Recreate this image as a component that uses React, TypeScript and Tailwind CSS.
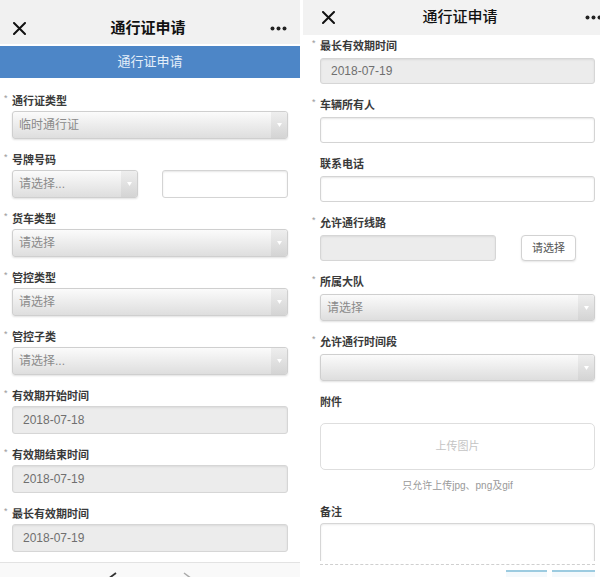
import React from 'react';

const FONT = { fontFamily: '"Liberation Sans", "Noto Sans CJK SC", sans-serif' };

const CloseIcon: React.FC = () => (
  <svg width="13" height="13" viewBox="0 0 13 13" className="shrink-0">
    <path d="M1 1 L12 12 M12 1 L1 12" stroke="#111" strokeWidth="2" strokeLinecap="round" />
  </svg>
);

const MoreIcon: React.FC = () => (
  <svg width="17" height="5" viewBox="0 0 17 5" className="shrink-0">
    <circle cx="2.5" cy="2.5" r="2" fill="#222" />
    <circle cx="8.5" cy="2.5" r="2" fill="#222" />
    <circle cx="14.5" cy="2.5" r="2" fill="#222" />
  </svg>
);

const Label: React.FC<{ text: string; required?: boolean }> = ({ text, required = true }) => (
  <div className="flex items-center h-[16px] text-[11px] leading-[16px] text-[#3a3a3a] font-bold">
    <span className="-ml-[8px] w-[8px] text-[9px] font-normal text-[#999] self-start leading-[10px]">{required ? '*' : ''}</span>
    {text}
  </div>
);

// jQuery-mobile style select with gradient and small arrow at right
const SelectBox: React.FC<{ value?: string; h?: string }> = ({ value = '', h = 'h-[28px]' }) => (
  <div className={`${h} flex items-stretch rounded-[3px] border border-[#cfcfcf] bg-linear-to-b from-[#fbfbfb] to-[#dedede] shadow-[0_1px_2px_rgba(0,0,0,0.12)]`}>
    <div className="flex-1 flex items-center pl-[6px] text-[12px] text-[#8a8a8a] truncate">{value}</div>
    <div className="w-[16px] flex items-center justify-center bg-linear-to-b from-[#eeeeee] to-[#d4d4d4] rounded-r-[3px]">
      <svg width="5" height="4" viewBox="0 0 5 4">
        <path d="M0 0 L5 0 L2.5 4 Z" fill="#ffffff" />
      </svg>
    </div>
  </div>
);

const DisabledInput: React.FC<{ value?: string; h?: string }> = ({ value = '', h = 'h-[28px]' }) => (
  <div className={`${h} flex items-center rounded-[3px] border border-[#d6d6d6] bg-[#ececec] pl-[10px] text-[12px] text-[#6f6f6f] shadow-[inset_0_1px_2px_rgba(0,0,0,0.08)]`}>
    {value}
  </div>
);

const TextInput: React.FC<{ h?: string }> = ({ h = 'h-[28px]' }) => (
  <div className={`${h} rounded-[3px] border border-[#d4d4d4] bg-white shadow-[inset_0_1px_2px_rgba(0,0,0,0.1)]`} />
);

const LeftField: React.FC<{ label: string; children: React.ReactNode }> = ({ label, children }) => (
  <div className="flex flex-col gap-[2px]">
    <Label text={label} />
    {children}
  </div>
);

const RightField: React.FC<{ label: string; required?: boolean; children: React.ReactNode }> = ({ label, required = true, children }) => (
  <div className="flex flex-col gap-[4px]">
    <Label text={label} required={required} />
    {children}
  </div>
);

const LeftScreen: React.FC = () => (
  <div className="w-[300px] shrink-0 h-full flex flex-col bg-white overflow-hidden">
    <div className="h-[44px] shrink-0 bg-[#f1f1f1] flex items-center justify-between px-[13px] pt-[12px]">
      <CloseIcon />
      <span className="text-[15px] font-bold text-[#111]">通行证申请</span>
      <MoreIcon />
    </div>
    <div className="h-[32px] shrink-0 mt-[2px] bg-[#4d86c7] flex items-center justify-center text-[13px] text-[#e4eef9]">
      通行证申请
    </div>
    <div className="flex flex-col gap-[13px] px-[12px] pt-[15px]">
      <LeftField label="通行证类型">
        <SelectBox value="临时通行证" />
      </LeftField>
      <LeftField label="号牌号码">
        <div className="grid grid-cols-2 gap-6">
          <SelectBox value="请选择..." />
          <TextInput />
        </div>
      </LeftField>
      <LeftField label="货车类型">
        <SelectBox value="请选择" />
      </LeftField>
      <LeftField label="管控类型">
        <SelectBox value="请选择" />
      </LeftField>
      <LeftField label="管控子类">
        <SelectBox value="请选择..." />
      </LeftField>
      <LeftField label="有效期开始时间">
        <DisabledInput value="2018-07-18" />
      </LeftField>
      <LeftField label="有效期结束时间">
        <DisabledInput value="2018-07-19" />
      </LeftField>
      <LeftField label="最长有效期时间">
        <DisabledInput value="2018-07-19" />
      </LeftField>
    </div>
    <div className="mt-[10px] h-[40px] shrink-0 border-t border-[#e3e3e3] bg-[#f9f9f9] flex justify-center gap-[64px] pt-[9px]">
      <svg width="12" height="14" viewBox="0 0 12 14">
        <path d="M10 1 L2 7 L10 13" stroke="#333" strokeWidth="1.8" fill="none" />
      </svg>
      <svg width="12" height="14" viewBox="0 0 12 14">
        <path d="M2 1 L10 7 L2 13" stroke="#aaa" strokeWidth="1.5" fill="none" />
      </svg>
    </div>
  </div>
);

const RightScreen: React.FC = () => (
  <div className="w-[309px] shrink-0 h-full flex flex-col bg-white overflow-hidden">
    <div className="h-[35px] shrink-0 bg-[#f2f2f2] flex items-center justify-between pl-[19px] pr-[10px]">
      <CloseIcon />
      <span className="text-[15px] text-[#111] font-medium">通行证申请</span>
      <MoreIcon />
    </div>
    <div className="flex flex-col px-[17px] pt-[3px]">
      <div className="flex flex-col gap-[13px]">
        <RightField label="最长有效期时间">
          <DisabledInput value="2018-07-19" h="h-[26px]" />
        </RightField>
        <RightField label="车辆所有人">
          <TextInput h="h-[26px]" />
        </RightField>
        <RightField label="联系电话" required={false}>
          <TextInput h="h-[26px]" />
        </RightField>
        <RightField label="允许通行线路">
          <div className="flex items-center">
            <div className="w-[176px]">
              <DisabledInput h="h-[26px]" />
            </div>
            <div className="ml-[25px] h-[26px] w-[55px] rounded-[4px] border border-[#d2d2d2] bg-white shadow-[0_1px_2px_rgba(0,0,0,0.1)] flex items-center justify-center text-[11px] text-[#555]">
              请选择
            </div>
          </div>
        </RightField>
        <RightField label="所属大队">
          <SelectBox value="请选择" h="h-[27px]" />
        </RightField>
        <RightField label="允许通行时间段">
          <SelectBox h="h-[27px]" />
        </RightField>
        <div className="flex flex-col gap-[13px]">
          <Label text="附件" required={false} />
          <div className="h-[47px] rounded-[5px] border border-[#dedede] bg-white flex items-center justify-center text-[11px] text-[#c4c4c4]">
            上传图片
          </div>
        </div>
      </div>
      <div className="mt-[8px] h-[16px] text-center text-[10px] leading-[16px] text-[#999]">只允许上传jpg、png及gif</div>
      <div className="mt-[10px]">
        <Label text="备注" required={false} />
      </div>
      <div className="mt-[3px] h-[38px] rounded-t-[4px] border border-b-0 border-[#d6d6d6] bg-white shadow-[inset_0_1px_2px_rgba(0,0,0,0.08)]" />
      <div className="mt-[3px] border-t border-dashed border-[#cfcfcf]" />
      <div className="mt-[5px] flex justify-end gap-[5px]">
        <div className="w-[41px] h-[10px] border-t-2 border-[#9ccbe0] bg-[#f4f9fc]" />
        <div className="w-[43px] h-[10px] border-t-2 border-[#9ccbe0] bg-[#f4f9fc]" />
      </div>
    </div>
  </div>
);

export default function App() {
  return (
    <div className="w-[600px] h-[577px] flex gap-[3px] bg-white overflow-hidden" style={FONT}>
      <LeftScreen />
      <RightScreen />
    </div>
  );
}
